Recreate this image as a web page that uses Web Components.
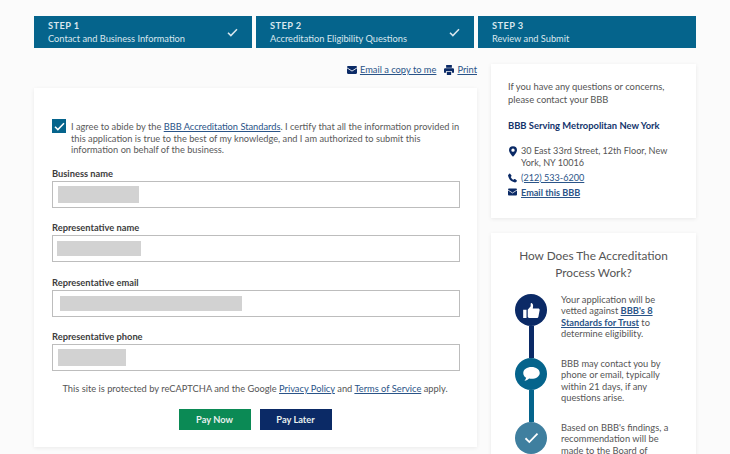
<!DOCTYPE html>
<html><head><meta charset="utf-8"><style>
html,body{margin:0;padding:0;height:454px;overflow:hidden;background:#fbfbfb}
body{font-family:Lato,"Open Sans","Liberation Sans",sans-serif;color:#555}
</style></head><body>
<app-page></app-page>
<script>
const ICONS={
check:'<svg viewBox="0 0 12 10" width="11" height="9"><path d="M1 5.2 4.2 8.4 11 1.4" fill="none" stroke="currentColor" stroke-width="1.7"/></svg>',
mail:'<svg viewBox="0 0 14 11" width="10" height="8"><rect width="14" height="11" rx="1.5" fill="currentColor"/><path d="M0 2.5 7 7l7-4.5" fill="none" stroke="#fff" stroke-width="1.2"/></svg>',
print:'<svg viewBox="0 0 14 14" width="10" height="10"><path fill="currentColor" d="M3 0h8v4H3zM1.500 4.500h11A1.500 1.500 0 0 1 14 6v5h-3V8.500H3V11H0V6a1.500 1.500 0 0 1 1.500-1.500zM4 9.500h6V14H4z"/></svg>',
pin:'<svg viewBox="0 0 12 16" width="8" height="11"><path fill="currentColor" fill-rule="evenodd" d="M6 0a6 6 0 0 1 6 6c0 3.500-4 7.500-6 10C4 13.500 0 9.500 0 6a6 6 0 0 1 6-6zm0 3.500a2.500 2.500 0 1 0 0 5 2.500 2.500 0 0 0 0-5z"/></svg>',
phone:'<svg viewBox="0 0 14 14" width="10" height="10"><path fill="currentColor" d="M3.300.3 5.400 3c.3.4.2.9-.1 1.200L4.200 5.300c.8 1.800 2.600 3.700 4.500 4.500l1.100-1.100c.3-.3.800-.4 1.200-.1l2.700 2.100c.4.300.4.900.1 1.200l-1.400 1.500c-.4.400-1 .6-1.500.5C5.300 13 1 8.700.1 3.500 0 3 .200 2.400.6 2L2.100.3c.3-.4.900-.4 1.200 0z"/></svg>',
thumb:'<svg viewBox="0 0 20 18" width="17" height="15"><path fill="#fff" d="M0 8h4v10H0zM5.500 8 9 4V1c0-.8.800-1.200 1.500-.8C12 1 12.300 3 11.500 6.500H18c1.200 0 2 1 1.800 2l-1.500 8c-.2 1-1 1.500-2 1.500H8c-1 0-2.500-.5-2.500-1.500z"/></svg>',
chat:'<svg viewBox="0 0 20 17" width="17" height="14"><path fill="#fff" d="M10 0c5.500 0 10 3.200 10 7.200s-4.500 7.200-10 7.200c-1 0-2-.1-2.900-.3C5.800 15.400 3.800 16.500 1.500 16.800c1-1.100 1.800-2.400 2-3.700C1.300 11.700 0 9.600 0 7.200 0 3.200 4.500 0 10 0z"/></svg>',
checkBig:'<svg viewBox="0 0 12 10" width="15" height="12"><path d="M1 5.200 4.200 8.400 11 1.400" fill="none" stroke="#fff" stroke-width="1.500"/></svg>'
};
function def(name,css,html){
  customElements.define(name,class extends HTMLElement{
    connectedCallback(){
      if(this.shadowRoot)return;
      const s=this.attachShadow({mode:'open'});
      s.innerHTML='<style>'+css+'</style>'+(typeof html==='function'?html(this):html);
    }
  });
}
const LINK='a{color:#2a5488;text-decoration:underline}';
def('step-tab',`:host{display:flex;align-items:center;justify-content:space-between;flex:1;height:32px;box-sizing:border-box;background:#05648c;color:#d9e7ee;padding:0 14px;font-size:9.250px;line-height:13px}
b{display:block;font-weight:700;letter-spacing:.4px}`,
h=>`<div><b>${h.getAttribute('n')}</b>${h.getAttribute('t')}</div>${h.hasAttribute('done')?ICONS.check:''}`);
def('form-field',`:host{display:block;margin-bottom:14.500px}
label{display:block;font-size:9.300px;font-weight:700;color:#3d3d3d;line-height:12px;margin-bottom:1px}
.box{height:27px;box-sizing:border-box;border:1px solid #bdbdbd;background:#fff;display:flex;align-items:center}
i{display:block;background:#d2d2d2}`,
h=>`<label>${h.getAttribute('label')}</label><div class="box"><i style="margin-left:${h.getAttribute('x')}px;width:${h.getAttribute('w')}px;height:${h.getAttribute('h')}px"></i></div>`);
def('app-form',`:host{display:block;background:#fff;box-shadow:0 1px 4px rgba(0,0,0,.07);padding:31px 17px 15px 18px;height:359px;box-sizing:border-box}
${LINK}
.agree{display:flex;gap:5px;margin-bottom:12px;font-size:9.260px;line-height:11.500px;color:#5a5a5a;white-space:nowrap}
.agree>div:last-child{padding-top:2px}
.cb{flex:none;width:14px;height:14px;background:#05648c;color:#fff;display:flex;align-items:center;justify-content:center}
.legal{text-align:center;font-size:9.300px;color:#555;margin:-2.500px 2px 14px 0;line-height:12px;white-space:nowrap}
.btns{display:flex;justify-content:center;gap:9px;margin-right:2px}
button{all:unset;width:72px;height:21px;text-align:center;color:#e8f0ee;font:700 9.300px/21px Lato,"Open Sans",sans-serif}
.g{background:#0b8a55}.n{background:#0b2a66}`,
`<div class="agree"><div class="cb">${ICONS.check}</div><div>I agree to abide by the <a href="#">BBB Accreditation Standards</a>. I certify that all the information provided in<br>this application is true to the best of my knowledge, and I am authorized to submit this<br>information on behalf of the business.</div></div>
<div class="fields">
<form-field label="Business name" x="5" w="81" h="17"></form-field>
<form-field label="Representative name" x="4" w="84" h="15"></form-field>
<form-field label="Representative email" x="7" w="182" h="15"></form-field>
<form-field label="Representative phone" x="5" w="68" h="17"></form-field>
</div>
<div class="legal">This site is protected by reCAPTCHA and the Google <a href="#">Privacy Policy</a> and <a href="#">Terms of Service</a> apply.</div>
<div class="btns"><button class="g">Pay Now</button><button class="n">Pay Later</button></div>`);
def('contact-card',`:host{display:block;background:#fff;box-shadow:0 1px 4px rgba(0,0,0,.08);box-sizing:border-box;height:154px;padding:16px 12px 0 17px;font-size:9.400px;line-height:13px;color:#555}
${LINK}
p{margin:0}
.name{font-weight:700;color:#12336b;margin:13px 0 13px}
.row{display:flex;gap:4px;line-height:11.500px;margin-bottom:3.500px;align-items:flex-start;font-size:9.100px}
.ic{flex:none;width:9px;display:flex;justify-content:center;color:#0b2a66;margin-top:1px}
.bold{font-weight:700}`,
`<p>If you have any questions or concerns,<br>please contact your BBB</p>
<p class="name">BBB Serving Metropolitan New York</p>
<div class="row"><span class="ic">${ICONS.pin}</span><span>30 East 33rd Street, 12th Floor, New<br>York, NY 10016</span></div>
<div class="row"><span class="ic">${ICONS.phone}</span><a href="#">(212) 533-6200</a></div>
<div class="row"><span class="ic">${ICONS.mail}</span><a href="#" class="bold">Email this BBB</a></div>`);
def('process-step',`:host{display:flex;gap:14px;height:64px}
.rail{flex:none;width:32px;display:flex;flex-direction:column;align-items:center}
.dot{flex:none;width:32px;height:32px;border-radius:50%;background:var(--c);display:flex;align-items:center;justify-content:center}
.line{flex:1;width:5px;background:var(--c)}
.txt{font-size:9.300px;line-height:11.300px;color:#555;white-space:nowrap}`,
h=>`<div class="rail"><div class="dot"><slot name="icon"></slot></div>${h.hasAttribute('last')?'':'<div class="line"></div>'}</div><div class="txt"><slot></slot></div>`);
def('process-card',`:host{display:block;background:#fff;box-shadow:0 1px 4px rgba(0,0,0,.08);box-sizing:border-box;height:240px;padding:15px 0 0 24px}
h3{margin:0 24px 13px 0;text-align:center;font-weight:400;font-size:11.800px;line-height:16.500px;color:#555}
a{color:#2a5488;font-weight:700}
span[slot]{display:flex}`,
`<h3>How Does The Accreditation<br>Process Work?</h3>
<div>
<process-step style="--c:#0b2a66"><span slot="icon">${ICONS.thumb}</span>Your application will be<br>vetted against <a href="#">BBB's 8<br>Standards for Trust</a> to<br>determine eligibility.</process-step>
<process-step style="--c:#05648c"><span slot="icon">${ICONS.chat}</span>BBB may contact you by<br>phone or email, typically<br>within 21 days, if any<br>questions arise.</process-step>
<process-step style="--c:#3f7f9f" last><span slot="icon">${ICONS.checkBig}</span>Based on BBB's findings, a<br>recommendation will be<br>made to the Board of</process-step>
</div>`);
def('app-page',`:host{display:block;padding:16px 34px 0;height:454px;box-sizing:border-box;overflow:hidden}
${LINK}
.steps{display:flex;gap:4px}
.cols{display:grid;grid-template-columns:443px 205px;column-gap:14px;margin-top:16px}
.tools{display:flex;justify-content:flex-end;gap:8px;align-items:flex-start;height:24px;font-size:9.300px;line-height:11px;color:#0b2a66}
.tools span{display:inline-flex;align-items:center;gap:3px}
.right{display:flex;flex-direction:column;gap:15px}`,
`<div class="steps">
<step-tab n="STEP 1" t="Contact and Business Information" done></step-tab>
<step-tab n="STEP 2" t="Accreditation Eligibility Questions" done></step-tab>
<step-tab n="STEP 3" t="Review and Submit"></step-tab>
</div>
<div class="cols">
<div><div class="tools"><span>${ICONS.mail}<a href="#">Email a copy to me</a></span><span>${ICONS.print}<a href="#">Print</a></span></div><app-form></app-form></div>
<div class="right"><contact-card></contact-card><process-card></process-card></div>
</div>`);
</script>
</body></html>
